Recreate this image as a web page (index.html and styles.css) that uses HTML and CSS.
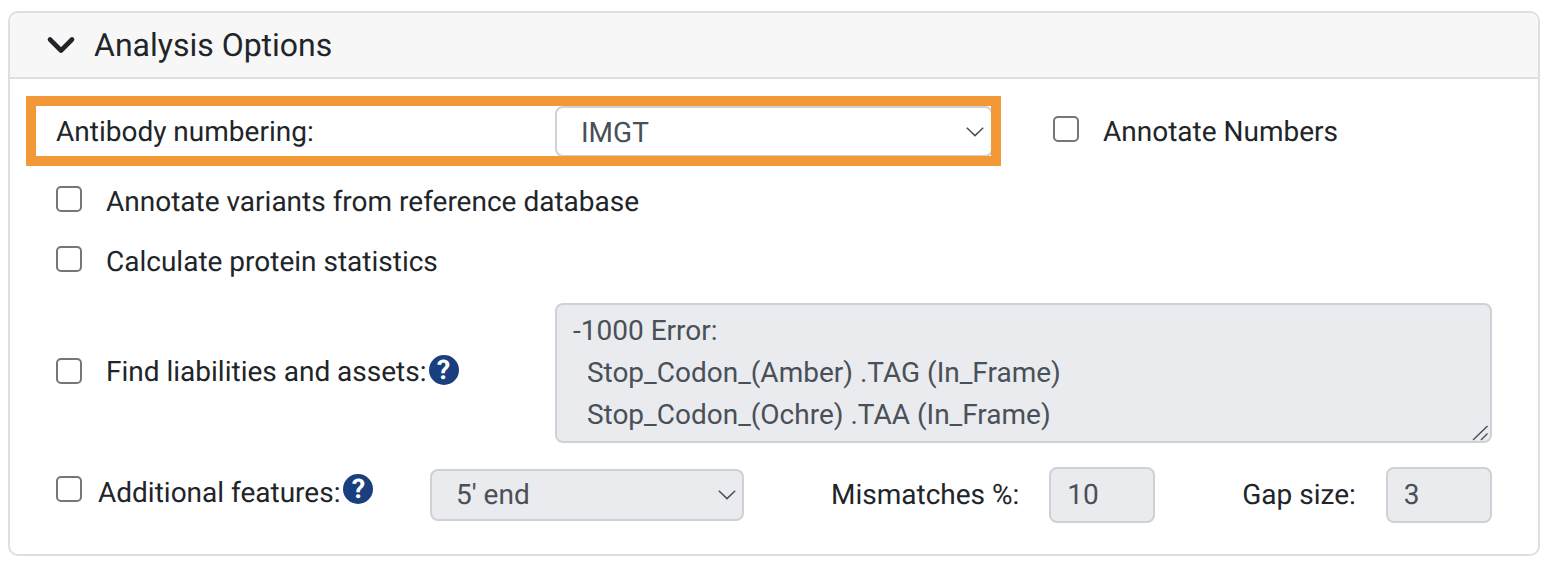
FILE: index.html
```html
<!DOCTYPE html>
<html lang="en">
<head>
<meta charset="utf-8">
<title>Analysis Options</title>
<link rel="stylesheet" href="styles.css">
</head>
<body>
<section class="card">
  <header class="card-header">
    <svg class="chevron" viewBox="0 0 30 20" aria-hidden="true"><path d="M4 4.5 15 15.5 26 4.5" fill="none" stroke="#212529" stroke-width="4.6" stroke-linecap="round" stroke-linejoin="round"/></svg>
    <h2 class="card-title">Analysis Options</h2>
  </header>
  <div class="card-body">
    <div class="row-top">
      <div class="highlight">
        <label class="numbering-label">Antibody numbering:</label>
        <div class="select select-main"><span class="select-value">IMGT</span><svg class="caret" viewBox="0 0 18 12" aria-hidden="true"><path d="M.8 1.8 9 9.6 17.2 1.8" fill="none" stroke="#4a5057" stroke-width="1.5"/></svg></div>
      </div>
      <div class="check-top"><span class="box"></span><span class="check-label">Annotate Numbers</span></div>
    </div>
    <div class="row-check"><span class="box"></span><span class="check-label">Annotate variants from reference database</span></div>
    <div class="row-check"><span class="box"></span><span class="check-label">Calculate protein statistics</span></div>
    <div class="row-liabilities">
      <div class="liability-label"><span class="box"></span><span class="check-label liability-name">Find liabilities and assets:</span><span class="help">?</span></div>
      <div class="textarea-wrap">
        <textarea class="liability-text" disabled>-1000 Error:
  Stop_Codon_(Amber) .TAG (In_Frame)
  Stop_Codon_(Ochre) .TAA (In_Frame)</textarea>
        <svg class="grip" viewBox="0 0 18 16" aria-hidden="true"><path d="M1 15 15.5 1M9 15 15.5 8.5" fill="none" stroke="#4a4d52" stroke-width="1.4"/></svg>
      </div>
    </div>
    <div class="row-features">
      <div class="features-label"><span class="box"></span><span class="features-text">Additional features:</span><span class="help">?</span></div>
      <div class="select select-features"><span>5' end</span><svg class="caret" viewBox="0 0 18 12" aria-hidden="true"><path d="M.8 1.8 9 9.6 17.2 1.8" fill="none" stroke="#4a5057" stroke-width="1.5"/></svg></div>
      <span class="field-label mismatch-label">Mismatches %:</span>
      <div class="num-input">10</div>
      <span class="field-label gap-label">Gap size:</span>
      <div class="num-input">3</div>
    </div>
  </div>
</section>
</body>
</html>
```
FILE: styles.css
```css
* { box-sizing: border-box; }
html, body { background: #fff; }
body {
  margin: 0;
  padding: 11px 12px 0 8px;
  font-family: Roboto, "Liberation Sans", sans-serif;
  font-size: 28px;
  color: #212529;
  text-rendering: geometricPrecision;
}
.card {
  width: 1532px;
  height: 545px;
  border: 2px solid #dfdfdf;
  border-radius: 10px;
  overflow: hidden;
}
.card-header {
  display: flex;
  align-items: center;
  height: 66px;
  padding: 0 0 1px 36px;
  background: #f7f7f7;
  border-bottom: 2px solid #dfdfdf;
}
.chevron { flex: none; width: 30px; height: 20px; margin-right: 18px; }
.card-title { margin: 0; font-size: 32px; font-weight: 400; line-height: 1; }
.card-body { padding: 17px 46px 0 16px; }
.row-top { display: flex; align-items: center; height: 70px; }
.highlight {
  display: flex;
  align-items: flex-start;
  flex: none;
  width: 975px;
  height: 70px;
  border: 10px solid #f29837;
  padding-left: 20px;
  overflow: hidden;
}
.numbering-label { flex: none; width: 499px; line-height: 51px; }
.select {
  display: flex;
  align-items: center;
  justify-content: space-between;
  flex: none;
  border: 2px solid #ced1d6;
  border-radius: 8px;
  color: #495057;
}
.select-main { width: 438px; height: 51px; padding: 0 7px 0 24px; background: #fff; }
.select-value { padding-top: 2px; }
.select-features { width: 314px; height: 52px; padding: 0 6px 2px 24px; background: #e9ebef; }
.caret { flex: none; width: 18px; height: 12px; }
.select-features .caret { margin-top: 2px; }
.check-top { display: flex; align-items: center; margin-left: 52px; }
.box {
  flex: none;
  width: 26px;
  height: 26px;
  margin-top: -4px;
  border: 2px solid #767676;
  border-radius: 5px;
  background: #fff;
}
.check-label { margin-left: 24px; white-space: nowrap; }
.row-check { display: flex; align-items: center; height: 60px; padding-left: 30px; }
.row-top + .row-check { margin-top: 5px; }
.row-liabilities { display: flex; align-items: center; height: 140px; margin-top: 12px; padding-left: 30px; }
.liability-label { display: flex; align-items: center; flex: none; width: 499px; }
.liability-name { margin-bottom: 3px; }
.help {
  flex: none;
  width: 30px;
  height: 30px;
  margin: -6px 0 0 2px;
  border-radius: 50%;
  background: #1a3f7e;
  color: #fff;
  font: 700 27px/30px Roboto, sans-serif;
  text-align: center;
}
.textarea-wrap { position: relative; flex: none; width: 937px; height: 140px; }
.liability-text {
  display: block;
  width: 100%;
  height: 100%;
  padding: 5px 16px;
  border: 2px solid #ced1d6;
  border-radius: 8px;
  background: #e9ebef;
  color: #495057;
  font: 28px/42px Roboto, "Liberation Sans", sans-serif;
  opacity: 1;
  overflow: hidden;
  resize: none;
  white-space: pre;
}
.grip { position: absolute; right: 2px; bottom: 2px; width: 18px; height: 16px; }
.row-features { display: flex; align-items: center; height: 56px; margin-top: 24px; padding-left: 30px; }
.features-label { display: flex; align-items: center; flex: none; width: 374px; }
.features-label .box { margin-top: -12px; }
.features-label .help { margin: -12px 0 0 3px; }
.features-text { margin: 0 0 6px 16px; white-space: nowrap; }
.field-label { flex: none; padding-bottom: 2px; white-space: nowrap; }
.mismatch-label { margin-left: 87px; }
.gap-label { margin-left: 87px; }
.num-input {
  display: flex;
  align-items: center;
  flex: none;
  width: 106px;
  height: 56px;
  margin-left: 30px;
  padding: 0 0 2px 16px;
  border: 2px solid #ced1d6;
  border-radius: 8px;
  background: #e9ebef;
  color: #495057;
}
```
